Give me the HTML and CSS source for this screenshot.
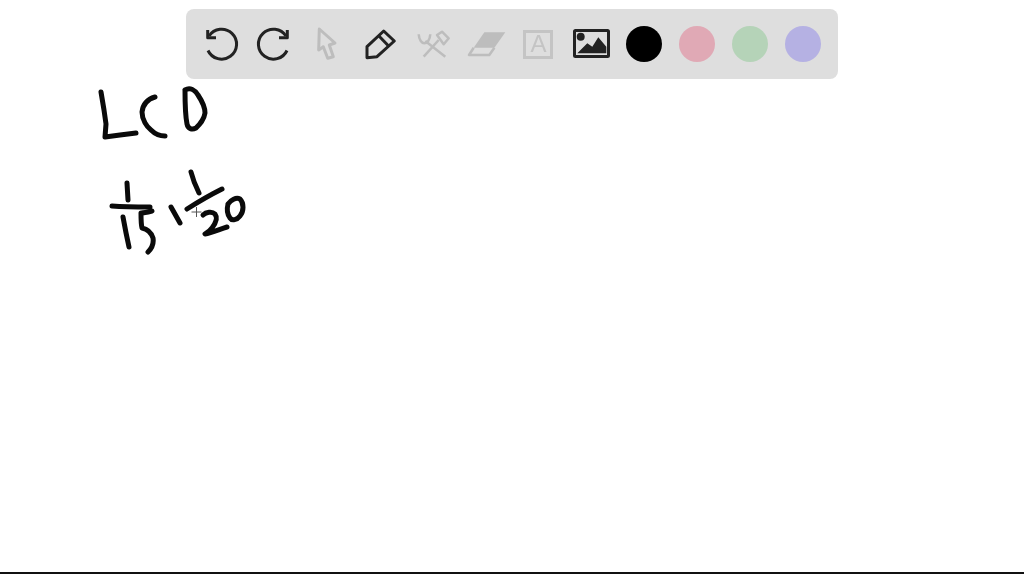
FILE: index.html
```html
<!DOCTYPE html>
<html lang="en">
<head>
    <meta charset="UTF-8">
    <meta name="viewport" content="width=device-width, initial-scale=1.0">
    <title>Whiteboard</title>
    <link rel="stylesheet" href="styles.css">
</head>
<body>

<div class="board">
    <!-- freehand ink on the canvas -->
    <svg class="ink" viewBox="0 0 1024 574" role="img" aria-label="Handwritten: LCD, 1/15, 1/20">
        <g class="strokes">
            <path d="M101 92 L104 110 L106 124 L105 137 L120 135 L136 133"/>
            <path d="M155 97 C148 99 143 104 142 112 C142 120 147 127 151 130 C155 134 160 136 165 136"/>
            <path d="M185 90 C190 87 195 90 198 95 C202 101 205 107 205 113 C204 120 200 124 196 128 C192 130 188 129 187 124 C185 114 185 100 185 90"/>
            <path d="M127 183 L128 200"/>
            <path d="M112 206 C125 207 138 207 150 207"/>
            <path d="M123 217 C125 228 127 238 129 247"/>
            <path d="M152 211 C148 212 144 213 141 213 C141 218 141 224 142 228 C147 229 151 232 153 238 C154 244 151 249 148 252"/>
            <path d="M171 207 L180 223"/>
            <path d="M191 172 C193 180 196 187 199 193"/>
            <path d="M187 209 C198 202 210 195 222 189"/>
            <path d="M203 215 C206 212 212 211 215 214 C218 218 215 224 212 228 C210 231 207 233 205 234 C212 233 220 229 227 227"/>
            <path d="M228 204 C231 200 236 197 240 199 C244 203 244 211 240 216 C237 220 232 221 230 218 C227 214 227 208 228 204"/>
        </g>
        <path class="crosshair" d="M191.5 212 H201.5 M196.5 207 V217"/>
    </svg>

    <div class="toolbar">
        <div class="tool">
            <svg class="icon" viewBox="0 0 36 36"><path d="M4.7 4 V11.7 H13"/><path d="M6 10 A15 15 0 1 1 5 24.5"/></svg>
        </div>
        <div class="tool">
            <svg class="icon" viewBox="0 0 36 36"><path d="M31.3 4 V11.7 H23"/><path d="M30 10 A15 15 0 1 0 31 24.5"/></svg>
        </div>
        <div class="tool">
            <svg class="icon off" viewBox="0 0 36 36"><path d="M10.3 3 L26 17 L20.3 19 L24.3 30.7 L18.7 32.3 L14.3 20.7 L9.7 24 Z"/></svg>
        </div>
        <div class="tool">
            <svg class="icon" viewBox="0 0 36 36"><path d="M21.7 5 L32.3 15 L15 30.7 L5 31.7 L5 20.7 Z"/><path d="M16.7 9.7 L27.3 20.7"/></svg>
        </div>
        <div class="tool">
            <svg class="icon off thin" viewBox="0 0 36 36">
                <path d="M8.7 30.7 L23.7 14"/>
                <path d="M30.3 30.7 L10.3 15"/>
                <path d="M3.7 8.3 C4 14 7 17.3 9.3 17.3 C12 17.3 15 14 15.3 8.3"/>
                <path d="M22 9 L27 5.7 L33.7 12.3 L28.7 18.3 Z"/>
            </svg>
        </div>
        <div class="tool">
            <svg class="icon off thin" viewBox="0 0 36 36">
                <path class="solid" d="M5.7 21.7 L16.3 6.3 H37.3 L26.4 21.7 Z"/>
                <path d="M5.7 21.7 L1 29 H21.3 L26.4 21.7"/>
            </svg>
        </div>
        <div class="tool">
            <div class="text-tool">A</div>
        </div>
        <div class="tool">
            <svg class="icon" viewBox="0 0 36 36">
                <rect x="1.5" y="4.5" width="34" height="26" rx="1"/>
                <circle class="solid" cx="7.7" cy="10.7" r="4"/>
                <path class="solid" d="M4.3 27.3 L14.3 17.3 L19.3 20.7 L25.3 11.3 L33.3 20.7 V27.3 Z"/>
            </svg>
        </div>
        <div class="tool"><div class="swatch black"></div></div>
        <div class="tool"><div class="swatch pink"></div></div>
        <div class="tool"><div class="swatch green"></div></div>
        <div class="tool"><div class="swatch purple"></div></div>
    </div>
</div>

</body>
</html>
```

FILE: styles.css
```css
html, body {
    margin: 0;
    padding: 0;
    background: #fff;
}
.board {
    position: relative;
    box-sizing: border-box;
    height: 574px;
    padding-top: 9px;
    border-bottom: 2px solid #111;
    overflow: hidden;
}
.ink {
    position: absolute;
    top: 0;
    left: 0;
    width: 1024px;
    height: 574px;
}
.strokes {
    filter: blur(0.5px);
}
.strokes path {
    fill: none;
    stroke: #0a0a0a;
    stroke-width: 5;
    stroke-linecap: round;
    stroke-linejoin: round;
}
.crosshair {
    fill: none;
    stroke: #555;
    stroke-width: 1;
}
.toolbar {
    position: relative;
    box-sizing: border-box;
    display: grid;
    grid-template-columns: repeat(12, 1fr);
    width: 652px;
    height: 70px;
    margin: 0 0 0 186px;
    padding: 0 9px;
    background: #dedede;
    border-radius: 8px;
    filter: blur(0.5px);
}
.tool {
    display: flex;
    align-items: center;
    justify-content: center;
}
.icon {
    width: 36px;
    height: 36px;
    overflow: visible;
}
.icon path, .icon rect {
    fill: none;
    stroke: #222;
    stroke-width: 3;
    stroke-linejoin: round;
}
.icon .solid {
    fill: #222;
    stroke: none;
}
.icon.off path {
    stroke: #bdbdbd;
}
.icon.off .solid {
    fill: #bdbdbd;
    stroke: none;
}
.icon.thin path {
    stroke-width: 2.5;
}
.text-tool {
    box-sizing: border-box;
    width: 30px;
    height: 29px;
    display: flex;
    align-items: center;
    justify-content: center;
    border: 3px solid #c4c4c4;
    color: #c4c4c4;
    font-family: "Liberation Sans", Arial, sans-serif;
    font-size: 24px;
    line-height: 1;
}
.swatch {
    width: 36px;
    height: 36px;
    border-radius: 50%;
}
.black { background: #000; }
.pink { background: #e0a9b5; }
.green { background: #b5d3b8; }
.purple { background: #b5b1e3; }
```
